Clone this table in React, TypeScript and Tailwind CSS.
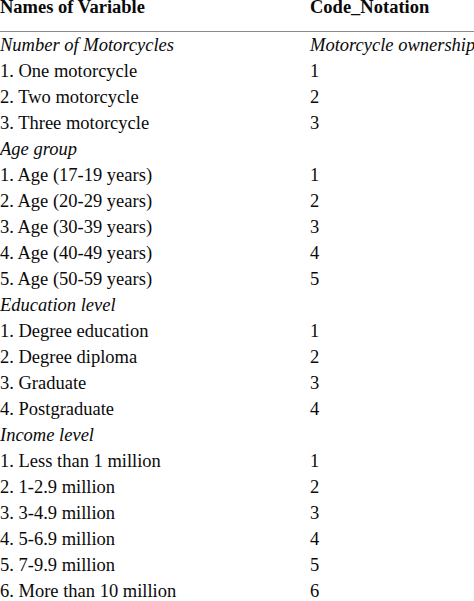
const rows: { name: string; code: string; italic?: boolean }[] = [
  { name: 'Number of Motorcycles', code: 'Motorcycle ownership', italic: true },
  { name: '1. One motorcycle', code: '1' },
  { name: '2. Two motorcycle', code: '2' },
  { name: '3. Three motorcycle', code: '3' },
  { name: 'Age group', code: '', italic: true },
  { name: '1. Age (17-19 years)', code: '1' },
  { name: '2. Age (20-29 years)', code: '2' },
  { name: '3. Age (30-39 years)', code: '3' },
  { name: '4. Age (40-49 years)', code: '4' },
  { name: '5. Age (50-59 years)', code: '5' },
  { name: 'Education level', code: '', italic: true },
  { name: '1. Degree education', code: '1' },
  { name: '2. Degree diploma', code: '2' },
  { name: '3. Graduate', code: '3' },
  { name: '4. Postgraduate', code: '4' },
  { name: 'Income level', code: '', italic: true },
  { name: '1. Less than 1 million', code: '1' },
  { name: '2. 1-2.9 million', code: '2' },
  { name: '3. 3-4.9 million', code: '3' },
  { name: '4. 5-6.9 million', code: '4' },
  { name: '5. 7-9.9 million', code: '5' },
  { name: '6. More than 10 million', code: '6' },
]

export default function App() {
  return (
    <div className="w-[474px] h-[601px] overflow-hidden bg-white text-[18.5px] leading-[26px] text-[#0a0a0a] font-['Liberation_Serif',serif]">
      {/* Encabezado */}
      <div className="h-[32px] border-b border-[#8a8a8a] grid grid-cols-[310px_1fr] font-bold">
        <div className="-mt-[6px]">Names of Variable</div>
        <div className="-mt-[6px]">Code_Notation</div>
      </div>

      {/* Filas */}
      {rows.map((r, i) => (
        <div key={i} className={`h-[26px] grid grid-cols-[310px_1fr] whitespace-nowrap ${r.italic ? 'italic' : ''}`}>
          <div>{r.name}</div>
          <div>{r.code}</div>
        </div>
      ))}
    </div>
  )
}
